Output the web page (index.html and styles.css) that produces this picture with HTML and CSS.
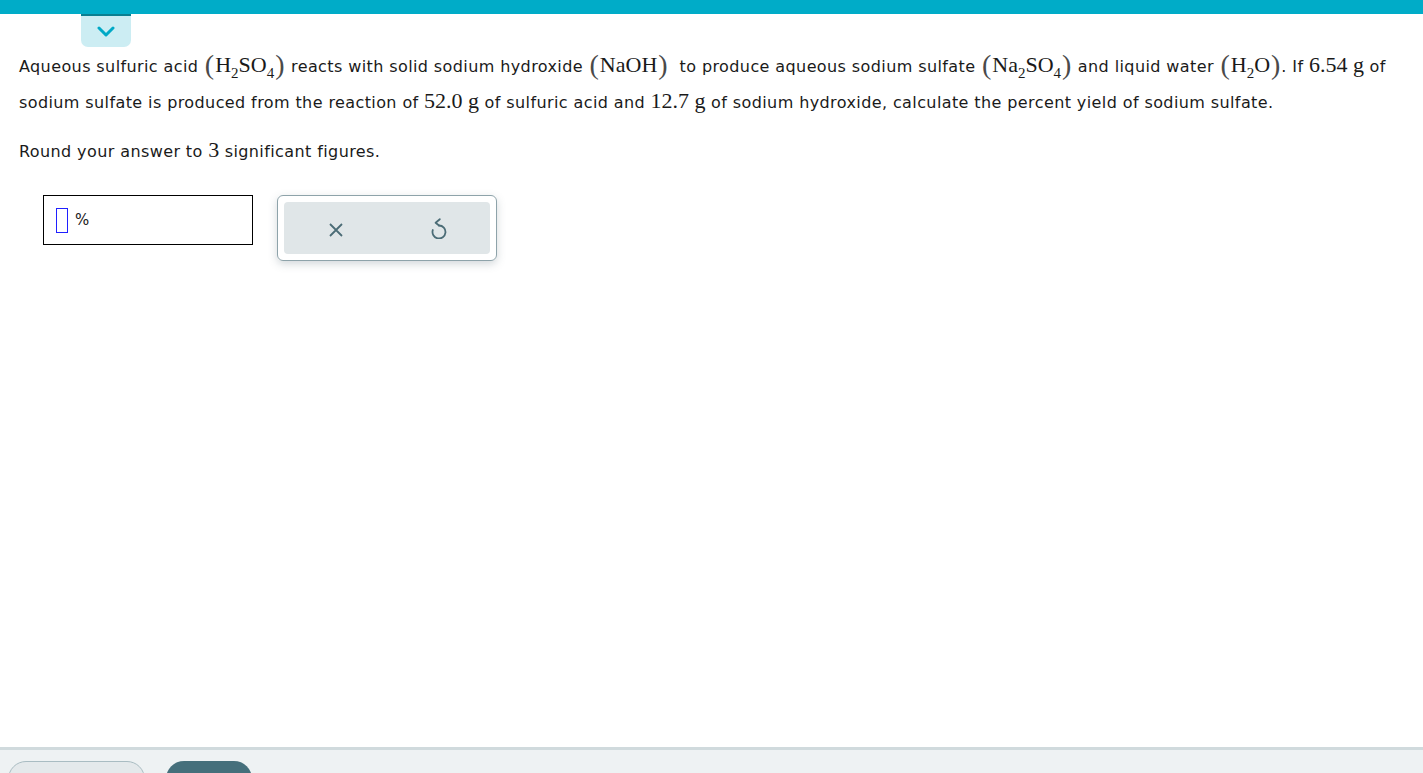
FILE: index.html
```html
<!DOCTYPE html>
<html>

<head lang="en">
  <meta charset="UTF-8">
  <title>Percent yield</title>
  <link rel="stylesheet" href="styles.css">
</head>

<body>
  <div class="topbar"></div>
  <div class="tab">
    <svg width="20" height="12" viewBox="0 0 20 12"><path d="M3 2 L10 9 L17 2" fill="none" stroke="#00a9c6" stroke-width="3" stroke-linecap="round" stroke-linejoin="round"/></svg>
  </div>
  <div class="main">
    <p class="question">
      Aqueous sulfuric acid <span class="m"><span class="par">(</span>H<sub>2</sub>SO<sub>4</sub><span class="par">)</span></span>
      reacts with solid sodium hydroxide <span class="m"><span class="par">(</span>NaOH<span class="par">)</span></span>&nbsp;
      to produce aqueous sodium sulfate <span class="m"><span class="par">(</span>Na<sub>2</sub>SO<sub>4</sub><span class="par">)</span></span>
      and liquid water <span class="m"><span class="par">(</span>H<sub>2</sub>O<span class="par">)</span></span>. If <span class="m">6.54</span> <span class="m">g</span> of
      sodium sulfate is produced from the reaction of <span class="m">52.0</span> <span class="m">g</span> of sulfuric acid and
      <span class="m">12.7</span> <span class="m">g</span> of sodium hydroxide, calculate the percent yield of sodium sulfate.
    </p>
    <p class="note">Round your answer to <span class="m">3</span> significant figures.</p>

    <div class="answer">
      <div class="field">
        <span class="cursor"></span>
        <span class="unit">%</span>
      </div>
      <div class="tools">
        <div class="tools-inner">
          <button class="tool tool-clear" title="Clear">
            <svg width="16" height="16" viewBox="0 0 16 16"><path d="M2 2 L14 14 M14 2 L2 14" stroke="#4b6c76" stroke-width="1.8" fill="none"/></svg>
          </button>
          <button class="tool" title="Undo">
            <svg width="18" height="22" viewBox="0 0 18 22"><path d="M9 8.5 A6.5 6.5 0 1 1 2.8 13" fill="none" stroke="#4b6c76" stroke-width="1.8" stroke-linecap="round"/><path d="M9.8 2.2 L5.6 5.8 L9 8.5" fill="none" stroke="#4b6c76" stroke-width="1.8" stroke-linecap="round" stroke-linejoin="round"/></svg>
          </button>
        </div>
      </div>
    </div>
  </div>
  <div class="footer">
    <div class="btn btn-light"></div>
    <div class="btn btn-dark"></div>
  </div>
</body>

</html>
```

FILE: styles.css
```css
* {
  margin: 0;
  padding: 0;
  box-sizing: border-box;
}

html,
body {
  height: 100%;
}

body {
  display: flex;
  flex-direction: column;
  font-family: "DejaVu Sans", Verdana, sans-serif;
  font-size: 16px;
  letter-spacing: 0.4px;
  color: #1a1a1a;
  background: #fff;
  overflow: hidden;
}

.topbar {
  height: 14px;
  background: #00acc8;
  flex-shrink: 0;
}

.tab {
  width: 50px;
  height: 33px;
  margin-left: 81px;
  background: #ccedf3;
  border-top: 2px solid #0a7f91;
  border-radius: 0 0 7px 7px;
  display: flex;
  align-items: center;
  justify-content: center;
  flex-shrink: 0;
}

.main {
  flex: 1;
  padding: 2px 19px 0;
}

.question {
  line-height: 36px;
  width: 1385px;
}

.note {
  line-height: 36px;
  margin-top: 13px;
}

.m {
  font-family: "Liberation Serif", "Times New Roman", serif;
  font-size: 22px;
  letter-spacing: 0;
  line-height: 1;
  white-space: nowrap;
}

.m sub {
  font-size: 15px;
  vertical-align: -6px;
  line-height: 0;
}

.par {
  font-size: 28px;
  color: #4a4a4a;
  vertical-align: -2px;
  line-height: 0;
  margin: 0 1px;
}

.answer {
  display: flex;
  align-items: flex-start;
  gap: 24px;
  margin-top: 25px;
  margin-left: 24px;
}

.field {
  width: 210px;
  height: 50px;
  border: 1px solid #000;
  display: flex;
  align-items: center;
  padding-left: 12px;
  gap: 7px;
}

.cursor {
  width: 12px;
  height: 25px;
  border: 1px solid #2020ff;
}

.unit {
  font-size: 15px;
  letter-spacing: 0;
}

.tools {
  width: 220px;
  height: 66px;
  border: 1px solid #8ea3aa;
  border-radius: 6px;
  padding: 6px;
  box-shadow: 0 3px 8px rgba(80, 100, 110, 0.25);
}

.tools-inner {
  height: 100%;
  background: #e0e6e8;
  border-radius: 4px;
  display: flex;
  justify-content: space-around;
  align-items: center;
}

.tool {
  border: 0;
  background: none;
  cursor: pointer;
  width: 60px;
  height: 40px;
  display: flex;
  align-items: center;
  justify-content: center;
}

.tool-clear svg {
  margin-top: 3px;
}

.footer {
  height: 26px;
  flex-shrink: 0;
  background: #eef2f3;
  border-top: 3px solid #d0dadd;
  display: flex;
  align-items: flex-start;
  padding: 11px 0 0 8px;
  gap: 21px;
  overflow: hidden;
}

.btn {
  height: 40px;
  border-radius: 18px;
  flex-shrink: 0;
}

.btn-light {
  width: 137px;
  background: #e4e9eb;
  border: 1px solid #a9bcc2;
}

.btn-dark {
  width: 86px;
  background: #456f7b;
}
```
